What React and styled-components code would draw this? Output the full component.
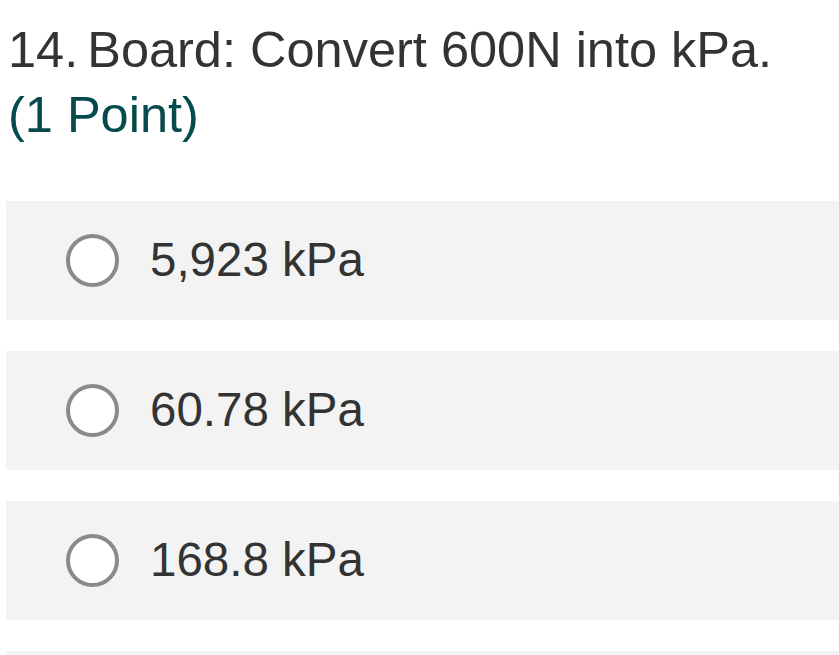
import React from 'react';
import styled, { createGlobalStyle } from 'styled-components';

const GlobalStyle = createGlobalStyle`
  html, body {
    margin: 0;
    padding: 0;
    background: #fff;
    overflow: hidden;
  }
  body {
    font-family: 'Liberation Sans', Arial, sans-serif;
  }
`;

const Page = styled.div`
  width: 839px;
  height: 655px;
  overflow: hidden;
  padding: 17px 0 0 6px;
  box-sizing: border-box;
`;

const Title = styled.div`
  padding-left: 2px;
  font-size: 50.5px;
  line-height: 65px;
  color: #333;
`;

const Number = styled.span`
  margin-right: 9px;
`;

const Points = styled.div`
  color: #054a4d;
`;

const Choices = styled.div`
  display: flex;
  flex-direction: column;
  gap: 31px;
  margin-top: 54px;
`;

const Choice = styled.label`
  display: flex;
  align-items: center;
  height: 119px;
  width: 900px;
  padding-left: 60px;
  box-sizing: border-box;
  background: #f3f3f3;
  cursor: pointer;
`;

const Radio = styled.span`
  width: 53px;
  height: 53px;
  box-sizing: border-box;
  border: 4px solid #8a8a8a;
  border-radius: 50%;
  background: #fff;
  flex-shrink: 0;
`;

const ChoiceText = styled.span`
  margin-left: 31px;
  font-size: 47.5px;
  color: #333;
  margin-top: -2px;
`;

const options = ['5,923 kPa', '60.78 kPa', '168.8 kPa', ''];

export default function App() {
  return (
    <>
      <GlobalStyle />
      <Page>
        <Title>
          <Number>14.</Number>Board: Convert 600N into kPa.
          <Points>(1 Point)</Points>
        </Title>
        <Choices>
          {options.map((o, i) => (
            <Choice key={i}>
              <Radio />
              <ChoiceText>{o}</ChoiceText>
            </Choice>
          ))}
        </Choices>
      </Page>
    </>
  );
}
